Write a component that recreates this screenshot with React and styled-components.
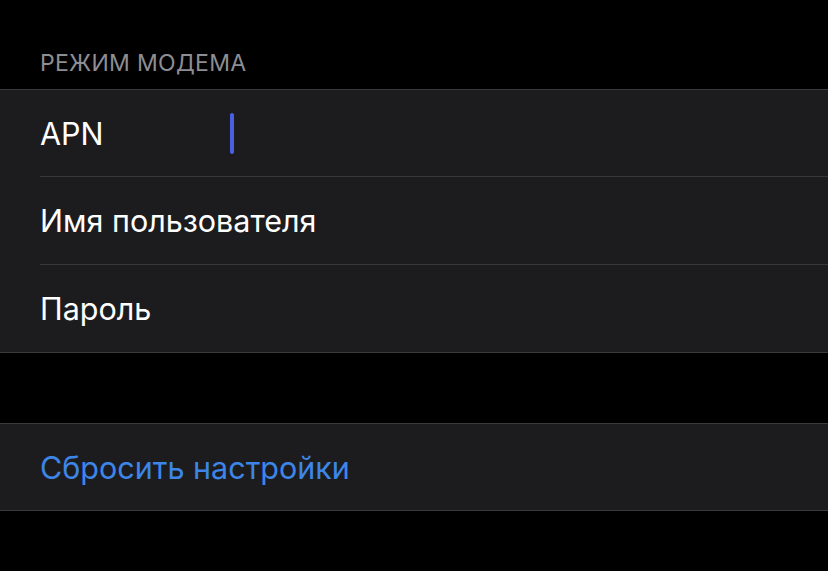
import React from 'react';
import styled, { createGlobalStyle } from 'styled-components';

const GlobalStyle = createGlobalStyle`
  html, body {
    margin: 0;
    padding: 0;
    background: #000;
  }
  body {
    font-family: Inter, "Noto Sans", sans-serif;
    -webkit-font-smoothing: antialiased;
  }
`;

const Page = styled.div`
  width: 828px;
  height: 571px;
  background: #000;
  overflow: hidden;
`;

const SectionHeader = styled.div`
  height: 89px;
  box-sizing: border-box;
  padding: 0 40px 12px;
  display: flex;
  align-items: flex-end;
  color: #8d8d93;
  font-size: 23px;
  letter-spacing: 0.3px;
  text-transform: uppercase;
`;

const Spacer = styled.div`
  height: ${({ h }) => h}px;
`;

const Group = styled.div`
  background: #1c1c1e;
  border-top: 1px solid #3a3a3c;
  border-bottom: 1px solid #3a3a3c;
`;

const Row = styled.div`
  height: ${({ h }) => h || 87}px;
  margin-left: 40px;
  display: flex;
  align-items: center;
  box-sizing: border-box;
  & + & {
    border-top: 1px solid #38383a;
    height: 88px;
  }
`;

const Label = styled.span`
  width: 190px;
  flex-shrink: 0;
  font-size: 30.5px;
  color: ${({ accent }) => (accent ? '#3d86e8' : '#fff')};
  white-space: nowrap;
`;

const Caret = styled.span`
  width: 4px;
  height: 41px;
  border-radius: 2px;
  background: #4a60e0;
`;

const App = () => (
  <Page>
    <GlobalStyle />
    <SectionHeader>Режим модема</SectionHeader>
    <Group>
      <Row h={86}>
        <Label>APN</Label>
        <Caret />
      </Row>
      <Row>
        <Label>Имя пользователя</Label>
      </Row>
      <Row>
        <Label>Пароль</Label>
      </Row>
    </Group>
    <Spacer h={70} />
    <Group>
      <Row h={86}>
        <Label accent>Сбросить настройки</Label>
      </Row>
    </Group>
  </Page>
);

export default App;
